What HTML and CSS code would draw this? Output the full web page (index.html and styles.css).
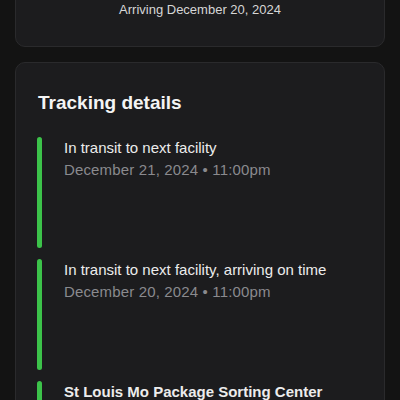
FILE: index.html
```html
<!DOCTYPE html>
<html lang="en">
<head>
    <meta charset="UTF-8">
    <meta name="viewport" content="width=device-width, initial-scale=1.0">
    <title>Order tracking</title>
    <link rel="stylesheet" href="styles.css">
</head>
<body>
    <div class="page">
        <div class="card summary">
            <p class="arrival">Arriving December 20, 2024</p>
        </div>

        <div class="card tracking">
            <h2>Tracking details</h2>
            <ul class="events">
                <li class="event">
                    <span class="bar"></span>
                    <div class="event-text">
                        <p class="event-title">In transit to next facility</p>
                        <p class="event-date">December 21, 2024 &bull; 11:00pm</p>
                    </div>
                </li>
                <li class="event">
                    <span class="bar"></span>
                    <div class="event-text">
                        <p class="event-title">In transit to next facility, arriving on time</p>
                        <p class="event-date">December 20, 2024 &bull; 11:00pm</p>
                    </div>
                </li>
                <li class="event">
                    <span class="bar"></span>
                    <div class="event-text">
                        <p class="event-title strong">St Louis Mo Package Sorting Center</p>
                        <p class="event-date">December 20, 2024 &bull; 4:12pm</p>
                    </div>
                </li>
            </ul>
        </div>
    </div>
</body>
</html>
```

FILE: styles.css
```css
body {
    margin: 0;
    background-color: #131313;
    font-family: "Liberation Sans", Arial, sans-serif;
    color: #ececec;
    overflow: hidden;
}

.page {
    padding: 0 15px;
    display: flex;
    flex-direction: column;
    gap: 15px;
}

.card {
    background-color: #1c1c1e;
    border: 1px solid #2a2a2c;
    border-radius: 10px;
}

/* верх карточки уходит за край экрана (страница прокручена) */
.summary {
    margin-top: -13px;
    padding: 12px 16px 26px;
    text-align: center;
}

.arrival {
    margin: 0;
    font-size: 13px;
    line-height: 20px;
    color: #d6d6d6;
}

.tracking {
    padding: 28px 21px 20px;
}

.tracking h2 {
    margin: 0 0 22px;
    font-size: 19px;
    line-height: 24px;
    font-weight: bold;
    color: #f4f4f4;
    padding-left: 1px;
}

.events {
    list-style: none;
    margin: 0;
    padding: 0;
    display: flex;
    flex-direction: column;
    gap: 11px;
}

.event {
    display: flex;
    gap: 22px;
    min-height: 111px;
}

.bar {
    flex: 0 0 5px;
    border-radius: 3px;
    background-color: #3cc24a;
}

.event-text p {
    margin: 0;
    font-size: 15px;
    line-height: 22px;
}

.event-title {
    color: #ececec;
}

.event-title.strong {
    font-weight: bold;
}

.event-date {
    color: #8a8a8e;
    letter-spacing: 0.15px;
}
```
